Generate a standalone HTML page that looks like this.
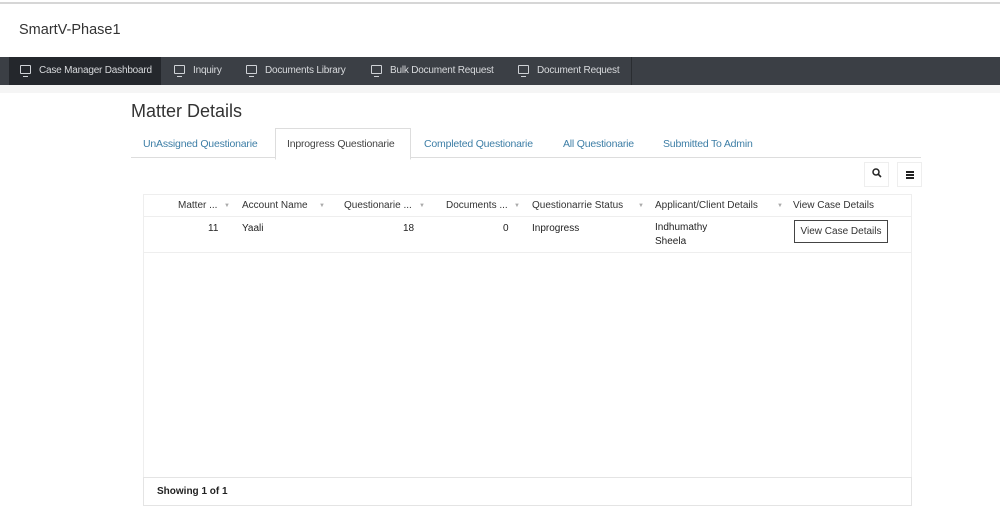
<!DOCTYPE html><html><head><style>
body{margin:0;width:1000px;height:509px;background:#fff;font-family:"Liberation Sans",sans-serif;position:relative;overflow:hidden}
.a{position:absolute}
.nav span{position:absolute;top:0;height:28px;line-height:28px;color:#d8dadd;font-size:10px;letter-spacing:-0.2px;white-space:nowrap}
.ic{display:inline-block;width:9px;height:7px;border:1.3px solid #cfd2d6;border-radius:1px;margin-right:8px;vertical-align:-1px;position:relative}
.ic:after{content:"";position:absolute;left:2px;bottom:-4px;width:5px;height:1.3px;background:#cfd2d6}
.tab{position:absolute;top:129px;height:30px;line-height:30px;color:#3d7ea6;font-size:10.5px;letter-spacing:-0.2px}
.th{position:absolute;top:195px;height:22px;line-height:22px;font-size:10px;color:#333}
.td{position:absolute;font-size:10px;color:#222}
.car{position:absolute;top:203px;font-size:6px;color:#aaa}
</style></head><body>
<div class="a" style="left:0;top:2px;width:1000px;height:2px;background:#d6d6d6"></div>
<div class="a" style="left:19px;top:22px;font-size:14.5px;color:#333">SmartV-Phase1</div>
<div class="a nav" style="left:0;top:57px;width:1000px;height:28px;background:#3b3f45">
<div class="a" style="left:9px;top:0;width:152px;height:28px;background:#24272c"></div>
<div class="a" style="left:631px;top:0;width:1px;height:28px;background:#2a2d31"></div>
<span style="left:20px"><i class="ic"></i>Case Manager Dashboard</span>
<span style="left:174px"><i class="ic"></i>Inquiry</span>
<span style="left:246px"><i class="ic"></i>Documents Library</span>
<span style="left:371px"><i class="ic"></i>Bulk Document Request</span>
<span style="left:518px"><i class="ic"></i>Document Request</span>
</div>
<div class="a" style="left:0;top:85px;width:1000px;height:8px;background:#f5f5f5"></div>
<div class="a" style="left:131px;top:101px;font-size:18px;color:#333">Matter Details</div>
<div class="a" style="left:131px;top:157px;width:790px;height:1px;background:#ddd"></div>
<div class="a" style="left:275px;top:128px;width:134px;height:30px;border:1px solid #ddd;border-bottom:1px solid #fff;background:#fff"></div>
<div class="tab" style="left:143px">UnAssigned Questionarie</div>
<div class="tab" style="left:287px;color:#444">Inprogress Questionarie</div>
<div class="tab" style="left:424px">Completed Questionarie</div>
<div class="tab" style="left:563px">All Questionarie</div>
<div class="tab" style="left:663px">Submitted To Admin</div>
<div class="a" style="left:864px;top:162px;width:23px;height:23px;border:1px solid #eee;text-align:center;line-height:23px;font-size:11px;font-weight:bold">
<svg width="10" height="10" viewBox="0 0 10 10" style="vertical-align:-1px"><circle cx="4" cy="4" r="3" stroke="#222" stroke-width="1.5" fill="none"/><path d="M6.2 6.2L9 9" stroke="#222" stroke-width="1.6"/></svg></div>
<div class="a" style="left:897px;top:162px;width:23px;height:23px;border:1px solid #eee"><div class="a" style="left:8px;top:8px;width:8px;height:1.5px;background:#222;box-shadow:0 3px #222,0 6px #222"></div></div>
<div class="a" style="left:143px;top:194px;width:767px;height:283px;border:1px solid #eee"></div>
<div class="a" style="left:143px;top:216px;width:768px;height:1px;background:#eee"></div>
<div class="a" style="left:143px;top:252px;width:768px;height:1px;background:#eee"></div>
<div class="th" style="left:178px">Matter ...</div><span class="car" style="left:224px">▼</span>
<div class="th" style="left:242px">Account Name</div><span class="car" style="left:319px">▼</span>
<div class="th" style="left:344px">Questionarie ...</div><span class="car" style="left:419px">▼</span>
<div class="th" style="left:446px">Documents ...</div><span class="car" style="left:514px">▼</span>
<div class="th" style="left:532px">Questionarrie Status</div><span class="car" style="left:638px">▼</span>
<div class="th" style="left:655px">Applicant/Client Details</div><span class="car" style="left:777px">▼</span>
<div class="th" style="left:793px">View Case Details</div>
<div class="td" style="left:208px;top:223px">11</div>
<div class="td" style="left:242px;top:223px">Yaali</div>
<div class="td" style="left:403px;top:223px">18</div>
<div class="td" style="left:503px;top:223px">0</div>
<div class="td" style="left:532px;top:223px">Inprogress</div>
<div class="td" style="left:655px;top:221px;line-height:14px">Indhumathy<br>Sheela</div>
<div class="a" style="left:794px;top:220px;width:92px;height:21px;border:1px solid #444;font-size:10px;line-height:22px;text-align:center;color:#333">View Case Details</div>
<div class="a" style="left:143px;top:477px;width:767px;height:27px;border:1px solid #e4e4e4;background:#fff"></div>
<div class="a" style="left:157px;top:486px;font-size:10px;font-weight:bold;color:#222">Showing 1 of 1</div>
</body></html>
